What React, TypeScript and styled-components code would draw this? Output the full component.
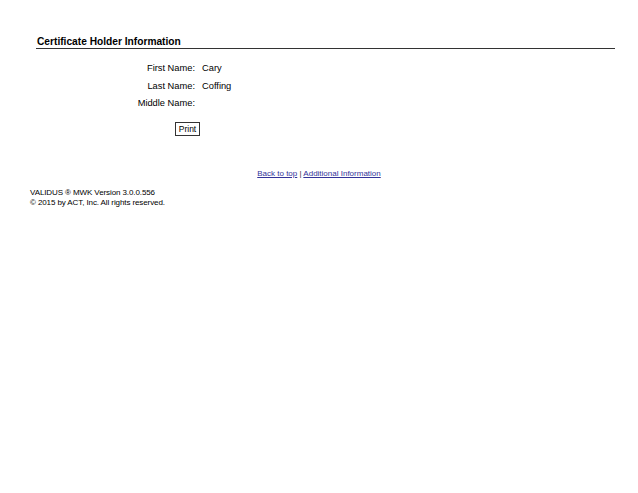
import React from "react";
import styled, { createGlobalStyle } from "styled-components";

const Global = createGlobalStyle`
  html, body { margin: 0; padding: 0; background: #fff; }
  body { font-family: "Liberation Sans", Arial, sans-serif; color: #000; }
`;

const Page = styled.div`
  width: 638px;
  height: 493px;
  box-sizing: border-box;
  padding-top: 35px;
  display: flex;
  flex-direction: column;
`;

const Section = styled.div`
  margin: 0 23px 0 36px;
`;

const Heading = styled.div`
  font-size: 10.2px;
  font-weight: bold;
  line-height: 12px;
  padding-left: 1px;
  padding-top: 1px;
  border-bottom: 1px solid #333;
`;

const Fields = styled.div`
  display: grid;
  grid-template-columns: 195px auto;
  column-gap: 7px;
  row-gap: 6px;
  margin-top: 14px;
  font-size: 9.3px;
  line-height: 11.5px;
`;

const Label = styled.div`
  text-align: right;
`;

const Value = styled.div``;

const PrintRow = styled.div`
  padding-left: 175px;
  margin-top: 8px;
`;

const PrintButton = styled.button`
  font-family: "Liberation Sans", Arial, sans-serif;
  font-size: 8.5px;
  height: 14px;
  width: 25px;
  padding: 0;
  border: 1px solid #333;
  background: #fff;
  color: #000;
  line-height: 12px;
`;

const Links = styled.div`
  margin-top: 33px;
  text-align: center;
  font-size: 8px;
  line-height: 10px;
  color: #333;
`;

const Link = styled.a`
  color: #333399;
  text-decoration: underline;
`;

const Footer = styled.div`
  margin-top: 9px;
  padding-left: 30px;
  font-size: 8px;
  line-height: 10px;
  letter-spacing: -0.1px;
`;

export default function App() {
  return (
    <>
      <Global />
      <Page>
        <Section>
          <Heading>Certificate Holder Information</Heading>
        </Section>
        <Fields>
          <Label>First Name:</Label>
          <Value>Cary</Value>
          <Label>Last Name:</Label>
          <Value>Coffing</Value>
          <Label>Middle Name:</Label>
          <Value></Value>
        </Fields>
        <PrintRow>
          <PrintButton>Print</PrintButton>
        </PrintRow>
        <Links>
          <Link href="#top">Back to top</Link> | <Link href="#info">Additional Information</Link>
        </Links>
        <Footer>
          <div>VALIDUS ® MWK Version 3.0.0.556</div>
          <div>© 2015 by ACT, Inc. All rights reserved.</div>
        </Footer>
      </Page>
    </>
  );
}
